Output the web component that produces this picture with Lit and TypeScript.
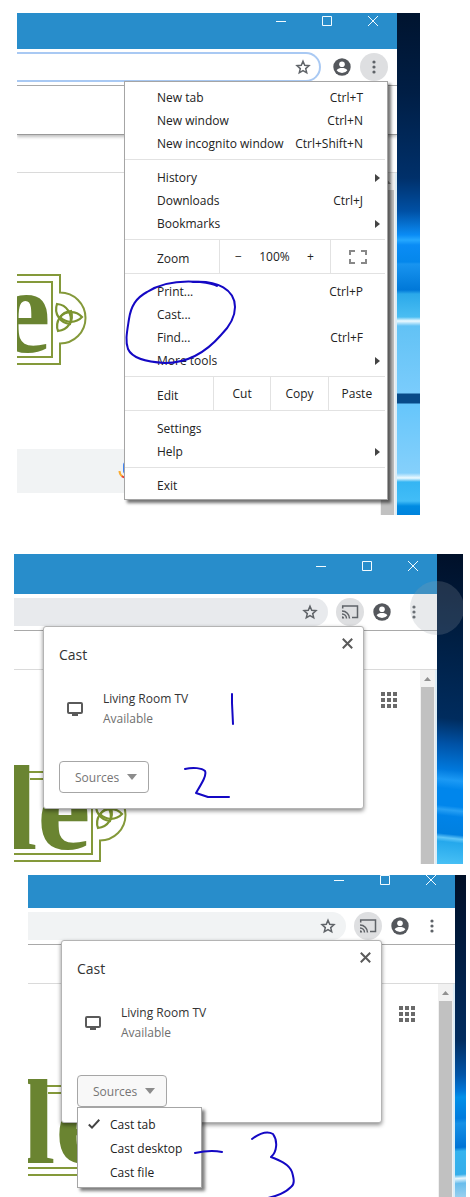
import { LitElement, html, css, svg, nothing } from "lit";
import { customElement, property } from "lit/decorators.js";
import { classMap } from "lit/directives/class-map.js";

const star = svg`<svg width="16" height="16" viewBox="0 0 16 16" fill="none" stroke="#5f6368" stroke-width="1.5" stroke-linejoin="miter"><path d="M8 2.2 9.7 6.300 14 6.700 10.700 9.600 11.700 13.800 8 11.600 4.300 13.800 5.300 9.600 2 6.700 6.300 6.300Z"/></svg>`;
const person = svg`<svg width="18" height="18" viewBox="0 0 18 18"><circle cx="9" cy="9" r="8.7" fill="#54575c"/><circle cx="9" cy="6.2" r="2.8" fill="#fff"/><path d="M3.6 12.2C4.6 10.6 7 10 9 10s4.400.600 5.400 2.200A6.500 6.500 0 0 1 9 15.100a6.500 6.500 0 0 1-5.400-2.900Z" fill="#fff"/></svg>`;
const dots = svg`<svg width="4" height="14" viewBox="0 0 4 14" fill="#5f6368"><circle cx="2" cy="2" r="1.600"/><circle cx="2" cy="7" r="1.600"/><circle cx="2" cy="12" r="1.600"/></svg>`;
const castIcon = svg`<svg width="18" height="16" viewBox="0 0 18 16" fill="none" stroke="#5f6368" stroke-width="1.500"><path d="M1.700 4.500V2H16.500V13.500H11"/><path d="M1 7A7.500 7.500 0 0 1 8.500 14.500M1 10A4.500 4.500 0 0 1 5.500 14.500"/><path d="M1 12.300A2.200 2.200 0 0 1 3.200 14.500H1Z" fill="#5f6368" stroke="none"/></svg>`;
const closeIcon = svg`<svg width="11" height="11" viewBox="0 0 11 11" stroke="#5a5a5a" stroke-width="2"><path d="M.8.8 10.200 10.200M10.200.8.8 10.200"/></svg>`;
const tv = svg`<svg width="16" height="14" viewBox="0 0 16 14"><rect x="1" y="1" width="14" height="10" rx="1" fill="none" stroke="#5a5a5a" stroke-width="2"/><path d="M5 11H11V14H5Z" fill="#5a5a5a"/></svg>`;
const apps = svg`<svg width="16" height="16" viewBox="0 0 16 16" fill="#6a6a6a"><path d="M0 0h4v4H0zM6 0h4v4H6zM12 0h4v4h-4zM0 6h4v4H0zM6 6h4v4H6zM12 6h4v4h-4zM0 12h4v4H0zM6 12h4v4H6zM12 12h4v4h-4z"/></svg>`;
const caret = svg`<svg width="10" height="6" viewBox="0 0 10 6" fill="#8c8c8c"><path d="M0 0H10L5 6Z"/></svg>`;
const arrow = svg`<svg width="5" height="8" viewBox="0 0 5 8" fill="#444"><path d="M0 0 5 4 0 8Z"/></svg>`;
const check = svg`<svg width="12" height="10" viewBox="0 0 12 10" fill="none" stroke="#444" stroke-width="2"><path d="M.8 5.500 4 8.600 11.300.8"/></svg>`;
const fullscreen = svg`<svg width="18" height="14" viewBox="0 0 18 14" fill="none" stroke="#888" stroke-width="2"><path d="M1 5V1H6M12 1H17V5M17 9V13H12M6 13H1V9"/></svg>`;
const mic = svg`<svg width="16" height="20" viewBox="0 0 16 20" fill="none" stroke-width="2"><rect x="5" y="1" width="6" height="12" rx="3" fill="#4285f4"/><path d="M1.500 10C1.500 13 2.500 14 4.500 15.500" stroke="#fbab30"/><path d="M4 15.200C6 17 10 17 12.500 14" stroke="#ea4335"/></svg>`;

@customElement("window-controls")
class WindowControls extends LitElement {
  static styles = css`
    :host { display: flex; justify-content: flex-end; padding-right: 1px; }
    button { width: 46px; height: 24px; border: 0; padding: 0; background: none; display: grid; place-items: center; }
    svg { display: block; fill: none; stroke: #f2fbff; }
  `;
  render() {
    return html`
      <button aria-label="Minimize"><svg width="10" height="10"><path d="M0 5.500H10"/></svg></button>
      <button aria-label="Maximize"><svg width="10" height="10"><path d="M.5.5H9.500V9.500H.5Z"/></svg></button>
      <button aria-label="Close"><svg width="10" height="10"><path d="M0 0 10 10M10 0 0 10"/></svg></button>
    `;
  }
}

@customElement("celtic-logo")
class CelticLogo extends LitElement {
  @property({ type: Number }) visible = 121;
  static styles = css`
    :host { display: block; }
    svg { display: block; }
    .frame { fill: none; stroke: #84993a; stroke-width: 2; }
    .knot { fill: none; stroke: #7c9430; stroke-width: 2.2; }
    .word { font: bold 120px "Liberation Serif", serif; fill: #6a8431; }
  `;
  render() {
    return html`<svg width=${this.visible} height="107" viewBox="${121 - this.visible} 0 ${this.visible} 107">
      <path class="frame" d="M19 15H90V32.500A25.500 25.500 0 0 1 90 83.500V104H0M20 22H82V97H0"/>
      <g class="knot">
        <path d="M87 44A15 15 0 0 1 100 64A15 15 0 0 1 87 44Z"/>
        <path d="M112 57A15 15 0 0 1 90 57A15 15 0 0 1 112 57Z"/>
        <path d="M88 71A15 15 0 0 1 101 51A15 15 0 0 1 88 71Z"/>
      </g>
      <text class="word" x="-6" y="92">le</text>
    </svg>`;
  }
}

@customElement("browser-menu")
class BrowserMenu extends LitElement {
  static styles = css`
    :host { display: block; box-sizing: border-box; width: 264px; background: #fff; border: 1px solid #a5a5a5; box-shadow: 3px 3px 3px rgba(0, 0, 0, 0.55); }
    .group { padding: 6px 0 4px; margin-right: 2px; border-bottom: 1px solid #e2e2e2; }
    .group:first-of-type { padding-top: 4px; }
    .group:last-of-type { border-bottom: 0; padding-bottom: 2px; }
    button { font: inherit; color: inherit; background: none; border: 0; padding: 0; text-align: center; }
    .item { display: flex; align-items: center; justify-content: space-between; width: 100%; height: 23px; padding: 0 22px 0 32px; }
    .item.sub { padding-right: 5px; }
    .strip { box-sizing: border-box; display: flex; height: 34px; margin-right: 2px; border-bottom: 1px solid #e2e2e2; }
    .label { box-sizing: border-box; padding-left: 32px; line-height: 37px; }
    .zoom { width: 94px; }
    .edit { width: 88px; }
    .cell { flex: 1; border-left: 1px solid #e2e2e2; }
    .level { flex: 1; display: flex; justify-content: space-between; align-items: center; padding: 0 16px 0 15px; border-left: 1px solid #e2e2e2; }
    .full { width: 55px; border-left: 1px solid #e2e2e2; display: grid; place-items: center; }
  `;
  item(name: string, key = "", sub = false) {
    return html`<button role="menuitem" class=${classMap({ item: true, sub })}><span>${name}</span>${sub ? arrow : html`<span>${key}</span>`}</button>`;
  }
  render() {
    return html`
      <div class="group">${this.item("New tab", "Ctrl+T")}${this.item("New window", "Ctrl+N")}${this.item("New incognito window", "Ctrl+Shift+N")}</div>
      <div class="group">${this.item("History", "", true)}${this.item("Downloads", "Ctrl+J")}${this.item("Bookmarks", "", true)}</div>
      <section class="strip">
        <span class="label zoom">Zoom</span>
        <span class="level"><button aria-label="Zoom out">−</button><span>100%</span><button aria-label="Zoom in">+</button></span>
        <button class="full" aria-label="Full screen">${fullscreen}</button>
      </section>
      <div class="group">${this.item("Print...", "Ctrl+P")}${this.item("Cast...")}${this.item("Find...", "Ctrl+F")}${this.item("More tools", "", true)}</div>
      <section class="strip">
        <span class="label edit">Edit</span>
        <button class="cell">Cut</button><button class="cell">Copy</button><button class="cell">Paste</button>
      </section>
      <div class="group">${this.item("Settings")}${this.item("Help", "", true)}</div>
      <div class="group">${this.item("Exit")}</div>
    `;
  }
}

@customElement("cast-dialog")
class CastDialog extends LitElement {
  @property({ type: Boolean }) open = false;
  static styles = css`
    :host { display: block; box-sizing: border-box; width: 321px; height: 183px; padding: 8px 8px 16px 15px; background: #fff; border: 1px solid #b4b4b4; border-radius: 3px; box-shadow: 0 2px 4px rgba(0, 0, 0, 0.45); color: #333; }
    button { font: inherit; color: inherit; background: none; border: 0; padding: 0; }
    .head { display: flex; justify-content: space-between; align-items: flex-start; height: 54px; }
    h2 { margin: 10px 0 0; font-size: 14px; font-weight: 400; line-height: 20px; }
    .close { width: 16px; height: 16px; display: grid; place-items: center; }
    .device { display: flex; align-items: center; gap: 20px; padding-left: 8px; height: 40px; text-align: left; line-height: 20px; }
    .device span { display: block; }
    .device .state { color: #6e6e6e; }
    .picker { position: relative; width: 90px; margin-top: 32px; }
    .sources { box-sizing: border-box; width: 90px; height: 32px; display: flex; align-items: center; justify-content: space-between; padding: 0 11px 0 15px; border: 1px solid #a6a6a6; border-radius: 4px; color: #757575; }
    .sources.active { background: #f8f8f8; }
    .list { position: absolute; left: 0; top: 32px; box-sizing: border-box; width: 125px; padding: 4px 0 3px; background: #fff; border: 1px solid #a5a5a5; box-shadow: 3px 3px 3px rgba(0, 0, 0, 0.5); color: #222; }
    .option { display: grid; grid-template-columns: 22px 1fr; align-items: center; width: 100%; height: 24px; padding-left: 10px; text-align: left; }
  `;
  render() {
    return html`
      <div class="head"><h2>Cast</h2><button class="close" aria-label="Close">${closeIcon}</button></div>
      <button class="device">${tv}<span><span>Living Room TV</span><span class="state">Available</span></span></button>
      <div class="picker">
        <button class=${classMap({ sources: true, active: this.open })} aria-haspopup="menu">Sources ${caret}</button>
        ${this.open
          ? html`<div class="list" role="menu">${["Cast tab", "Cast desktop", "Cast file"].map(
              (name, i) => html`<button class="option" role="menuitem"><span>${i === 0 ? check : nothing}</span><span>${name}</span></button>`
            )}</div>`
          : nothing}
      </div>
    `;
  }
}

@customElement("browser-window")
class BrowserWindow extends LitElement {
  @property() kind: "menu" | "cast" | "sources" = "menu";
  static styles = css`
    :host { display: block; flex: 1; min-width: 0; background: #fff; }
    .title { box-sizing: border-box; background: #288dcb; display: flex; flex-direction: column; justify-content: flex-end; padding-bottom: 16px; height: 36px; }
    .cast .title { height: 40px; }
    .sources .title { height: 33px; overflow: hidden; }
    .bar { position: relative; z-index: 1; display: flex; align-items: center; gap: 4px; height: 36px; padding-right: 9px; border-bottom: 1px solid #a9a9a9; }
    .omni { box-sizing: border-box; flex: 1; display: flex; align-items: center; height: 28px; margin-right: 4px; padding-right: 10px; border-radius: 0 14px 14px 0; background: #e8eaed; }
    .menu .omni { height: 30px; margin-right: 3px; padding-right: 8px; background: #fff; border: 2px solid #a9c9f3; border-left: 0; border-radius: 0 15px 15px 0; }
    .sources .omni { background: #f1f3f4; }
    input { flex: 1; min-width: 0; border: 0; outline: 0; padding: 0; background: none; font: inherit; }
    button { border: 0; padding: 0; background: none; display: grid; place-items: center; }
    .round { width: 28px; height: 28px; border-radius: 50%; }
    .on { background: #dedfe1; }
    browser-menu { position: absolute; top: 32px; right: 9px; }
    cast-dialog { position: absolute; top: 32px; right: 73px; }
    .tray { height: 48px; border-bottom: 1px solid #999; box-shadow: 0 2px 3px rgba(0, 0, 0, 0.25); clip-path: inset(0 0 -6px 0); }
    .strip { height: 38px; border-bottom: 1px solid #dadada; }
    .menu .strip { height: 37px; }
    .body { display: flex; border-right: 2px solid #dcedf7; }
    .page { flex: 1; min-width: 0; padding-bottom: 22px; }
    .cast .page { padding-bottom: 0; }
    .sources .page { padding-bottom: 19px; }
    .links { box-sizing: border-box; height: 87px; padding: 22px 23px 0 0; display: flex; justify-content: flex-end; align-items: flex-start; }
    .search { display: flex; align-items: center; height: 44px; margin-top: 82px; width: 117px; background: #f1f3f4; }
    .mic { width: 16px; }
    .scroll { width: 15px; background: #f1f1f1; display: flex; flex-direction: column; align-items: center; }
    .up { height: 17px; width: 15px; }
    .thumb { flex: 1; width: 13px; background: #c1c1c1; }
  `;
  render() {
    const menu = this.kind === "menu";
    const logoWidth = { menu: 74, cast: 117, sources: 121 }[this.kind];
    return html`<div class=${this.kind}>
      <div class="title"><window-controls></window-controls></div>
      <div class="bar">
        <div class="omni"><input type="text" aria-label="Address" /><button aria-label="Bookmark this page">${star}</button></div>
        ${menu ? nothing : html`<button class="round on" aria-label="Cast">${castIcon}</button>`}
        <button class="round" aria-label="Profile">${person}</button>
        <button class=${classMap({ round: true, on: menu })} aria-label="Menu">${dots}</button>
        ${menu ? html`<browser-menu role="menu"></browser-menu>` : html`<cast-dialog ?open=${this.kind === "sources"}></cast-dialog>`}
      </div>
      ${menu ? html`<div class="tray"></div>` : nothing}
      <div class="strip"></div>
      <div class="body">
        <div class="page">
          <div class="links"><button aria-label="Apps">${apps}</button></div>
          <celtic-logo .visible=${logoWidth}></celtic-logo>
          ${menu ? html`<div class="search"><input type="text" aria-label="Search" /><button class="mic" aria-label="Search by voice">${mic}</button></div>` : nothing}
        </div>
        <div class="scroll"><button class="up" aria-label="Scroll up"><svg width="7" height="4" fill="#909090"><path d="M0 4 3.500 0 7 4Z"/></svg></button><div class="thumb"></div></div>
      </div>
    </div>`;
  }
}

@customElement("app-root")
class AppRoot extends LitElement {
  static styles = css`
    :host { display: block; background: #fff; padding-top: 13px; font: 12px "Open Sans", "Noto Sans", sans-serif; color: #222; }
    .shot { position: relative; display: flex; }
    .first { margin: 0 50px 39px 17px; }
    .second { margin: 0 7px 11px 14px; }
    .third { margin: 0 4px 0 28px; }
    .desk { width: 23px; }
    .first .desk { background: linear-gradient(#00142f 0, #001e45 80px, #00306a 165px, #0050a4 198px, #0a8cf5 222px, #25a8ff 227px, #0a8cf5 232px, #0487ec 249px, #1894f0 251px, #0078d8 277px, #2ba9ea 281px, #4abdf2 304px, #eefaff 308px, #62c2f5 313px, #7accfc 380px, #084a88 381px, #084a88 390px, #66c6fb 391px, #85d0fb 460px, #eefaff 465px, #35b5f3 469px, #42bdf7 488px, #008be2 493px, #0083dc 502px); }
    .second .desk { width: 26px; background: linear-gradient(186deg, #001029 0, #001c3e 70px, #002c5e 165px, #0052a6 190px, #0079dd 216px, #1c9af5 226px, #0086ec 235px, #0086ec 252px, #27a0f4 256px, #0083e8 262px, #0080e0 280px, #60c6f8 284px, #25a8ec 288px, #48c0f5 310px); }
    .third .desk { width: 11px; background: linear-gradient(176deg, #000f26 0, #001d42 80px, #002c5f 165px, #0055a8 200px, #0078d8 216px, #0090e8 222px, #007bdd 243px, #1590e6 248px, #0074d5 272px, #35b3ee 276px, #35aeea 299px, #e8f6fd 303px, #69bdec 308px, #9ad0ef 322px); }
    .ink { position: absolute; left: 0; top: 0; z-index: 2; pointer-events: none; fill: none; stroke: #1408c4; stroke-width: 2; stroke-linecap: round; stroke-linejoin: round; }
    .clip { position: absolute; inset: 0; overflow: hidden; pointer-events: none; z-index: 2; }
    .halo { position: absolute; right: -1px; top: 27px; width: 54px; height: 54px; border-radius: 50%; background: rgba(150, 160, 170, 0.22); }
  `;
  render() {
    return html`
      <section class="shot first">
        <browser-window kind="menu"></browser-window><div class="desk"></div>
        <svg class="ink" width="403" height="502" viewBox="17 13 403 502"><path d="M192 282C218 280 235 290 235 307C235 318 230 326 221 335C208 350 189 363 165 363C145 362 132 358 128 349C125 341 127 332 129 319C131 306 136 298 147 292C161 283 177 280 200 282C209 283 214 284 217 286"/></svg>
      </section>
      <section class="shot second">
        <browser-window kind="cast"></browser-window><div class="desk"></div>
        <div class="clip"><div class="halo"></div></div>
        <svg class="ink" width="449" height="310" viewBox="14 554 449 310"><path d="M232 694V703L233 724M185 769C193 767 202 768 205 771C207 775 202 783 196 793L208 797H229"/></svg>
      </section>
      <section class="shot third">
        <browser-window kind="sources"></browser-window><div class="desk"></div>
        <svg class="ink" width="438" height="322" viewBox="28 875 438 322"><path d="M195 1153C204 1151 213 1150 222 1152M252 1139C260 1133 268 1131 273 1134C278 1141 277 1152 271 1157C279 1160 289 1164 292 1172C294 1179 295 1184 291 1187C286 1192 277 1196 268 1198"/></svg>
      </section>
    `;
  }
}
